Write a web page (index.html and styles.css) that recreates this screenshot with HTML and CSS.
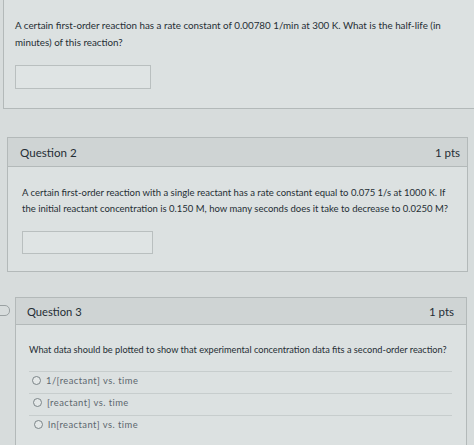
FILE: index.html
```html
<!DOCTYPE html>
<html>
<head>
<meta charset="utf-8">
<link rel="stylesheet" href="styles.css">
</head>
<body>
<div class="page">
  <div class="card card1">
    <div class="body">
      <p class="qtext">A certain first-order reaction has a rate constant of 0.00780 1/min at 300 K. What is the half-life (in minutes) of this reaction?</p>
      <div class="answer"></div>
    </div>
  </div>

  <div class="card card2">
    <div class="header">
      <span class="title">Question 2</span>
      <span class="pts">1 pts</span>
    </div>
    <div class="body">
      <p class="qtext">A certain first-order reaction with a single reactant has a rate constant equal to 0.075 1/s at 1000 K. If the initial reactant concentration is 0.150 M, how many seconds does it take to decrease to 0.0250 M?</p>
      <div class="answer"></div>
    </div>
  </div>

  <div class="row3">
    <div class="flag"></div>
    <div class="card card3">
      <div class="header">
        <span class="title">Question 3</span>
        <span class="pts">1 pts</span>
      </div>
      <div class="body">
        <p class="qtext">What data should be plotted to show that experimental concentration data fits a second-order reaction?</p>
        <ul class="options">
          <li class="option"><span class="radio"></span>1/[reactant] vs. time</li>
          <li class="option"><span class="radio"></span>[reactant] vs. time</li>
          <li class="option"><span class="radio"></span>ln[reactant] vs. time</li>
        </ul>
      </div>
    </div>
  </div>
</div>
</body>
</html>
```
FILE: styles.css
```css
html, body {
  margin: 0;
  padding: 0;
  background: #d7dcdc;
  overflow: hidden;
}
body {
  font-family: Lato, "Open Sans", sans-serif;
  color: #252e34;
  width: 474px;
  height: 445px;
}
.page {
  display: flex;
  flex-direction: column;
}
.card {
  background: #dce1e1;
  border: 1px solid #b3b9b9;
}
.card1 {
  margin-left: 3px;
  border-top: none;
  border-right: none;
  height: 109px;
  box-sizing: border-box;
}
.card1 .body {
  padding: 17px 0 0 11px;
}
.qtext {
  margin: 0;
  font-size: 9.8px;
  line-height: 16.5px;
}
.card2 .qtext {
  font-size: 9.5px;
  line-height: 15.5px;
  max-width: 432px;
}
.card3 .qtext {
  font-size: 9.2px;
  white-space: nowrap;
}
.answer {
  width: 136px;
  height: 24px;
  border: 1px solid #b9bfbf;
  background: #dfe4e4;
  box-sizing: border-box;
}
.card1 .answer {
  margin-top: 15px;
}
.card2 {
  margin-top: 28px;
  margin-left: 7px;
  width: 461px;
  height: 135px;
  box-sizing: border-box;
}
.header {
  display: flex;
  justify-content: space-between;
  align-items: center;
  background: #cfd4d4;
  border-bottom: 1px solid #b3b9b9;
  height: 28px;
  padding: 0 7px 0 12px;
}
.title {
  font-size: 11.6px;
}
.pts {
  font-size: 11.5px;
}
.card2 .body {
  padding: 18px 0 0 14px;
}
.card2 .answer {
  margin-top: 15px;
  width: 131px;
  height: 23px;
}
.row3 {
  display: flex;
  align-items: flex-start;
  margin-top: 25px;
}
.flag {
  width: 14px;
  height: 9px;
  border: 1px solid #9aa1a2;
  border-radius: 5px;
  margin-left: -6px;
  margin-top: 8px;
  flex: none;
}
.card3 {
  margin-left: 5px;
  width: 452px;
  height: 160px;
  box-sizing: border-box;
  border-bottom: none;
}
.card3 .header {
  height: 26px;
  padding: 0 12px 0 11px;
}
.card3 .title {
  font-size: 11.2px;
}
.card3 .body {
  padding: 17px 14px 0 13px;
}
.options {
  list-style: none;
  margin: 12px 0 0 0;
  padding: 0;
}
.option {
  display: flex;
  align-items: center;
  height: 22px;
  padding-bottom: 3px;
  border-top: 1px solid #c7cdcd;
  box-sizing: border-box;
  font-size: 9.4px;
  letter-spacing: 0.45px;
  color: #5d676e;
  padding-left: 3px;
}
.option:nth-child(2) {
  padding-left: 4px;
}
.option:nth-child(3) {
  padding-left: 5px;
}
.radio {
  width: 7px;
  height: 7px;
  border: 1px solid #7c8588;
  border-radius: 50%;
  margin-right: 5px;
  background: #e4e8e8;
}
```
